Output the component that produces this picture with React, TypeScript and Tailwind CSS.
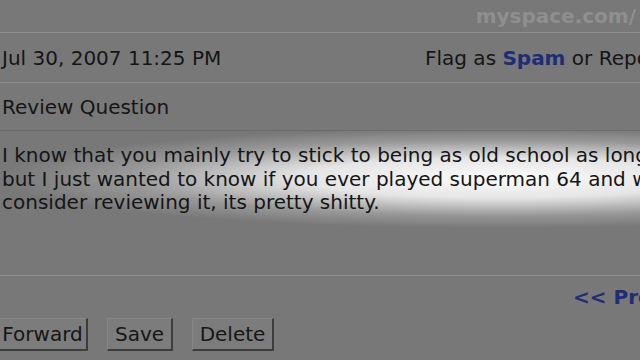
import React from "react";

const Btn = ({ label, w }: { label: string; w: string }) => (
  <div
    className={`${w} h-[33px] flex items-center justify-center bg-[#7c7c7c] border-r-2 border-b-2 border-r-[#3d3d3d] border-b-[#3d3d3d] border-l border-t border-l-[#868686] border-t-[#868686] text-[#161616]`}
  >
    {label}
  </div>
);

export default function App() {
  return (
    <div className="relative w-[640px] h-[360px] overflow-hidden bg-[#787878] text-[20px] text-[#151515] font-['DejaVu_Sans',sans-serif]">
      {/* spotlight glow behind the message */}
      <div className="absolute inset-0 bg-[radial-gradient(ellipse_500px_50px_at_500px_178px,rgba(255,255,255,0.98)_0%,rgba(248,248,248,0.85)_40%,rgba(210,210,210,0.35)_75%,transparent_100%)]" />

      <div className="relative">
        <div className="h-[32px] flex items-center justify-end pr-[4px] whitespace-nowrap">
          <span className="font-bold text-[#8f8f8f] text-[20px]">myspace.com/</span>
        </div>
        <div className="h-px bg-[#8a9091]" />

        <div className="h-[49px] flex items-center whitespace-nowrap">
          <div className="w-[425px] shrink-0 pl-[2px]">Jul 30, 2007 11:25 PM</div>
          <div className="shrink-0">
            Flag as <span className="font-bold text-[#1f2d77]">Spam</span> or Report
          </div>
        </div>
        <div className="h-px bg-[#8a9091]" />

        <div className="h-[47px] flex items-center pl-[2px]">Review Question</div>
        <div className="h-px bg-[#6c6c6c]" />

        <div className="pt-[13px] pl-[2px] leading-[23.5px] whitespace-nowrap">
          <div>I know that you mainly try to stick to being as old school as long as possible,</div>
          <div>but I just wanted to know if you ever played superman 64 and would</div>
          <div>consider reviewing it, its pretty shitty.</div>
        </div>

        <div className="h-[60px]" />
        <div className="h-px bg-[#899092]" />

        <div className="h-[42px] flex items-center pl-[573px] whitespace-nowrap">
          <span className="font-bold text-[#1f2d77]">&lt;&lt; Previous</span>
        </div>

        <div className="flex gap-[19px] -ml-[2px]">
          <Btn label="Forward" w="w-[90px]" />
          <Btn label="Save" w="w-[66px]" />
          <Btn label="Delete" w="w-[82px]" />
        </div>
      </div>
    </div>
  );
}
